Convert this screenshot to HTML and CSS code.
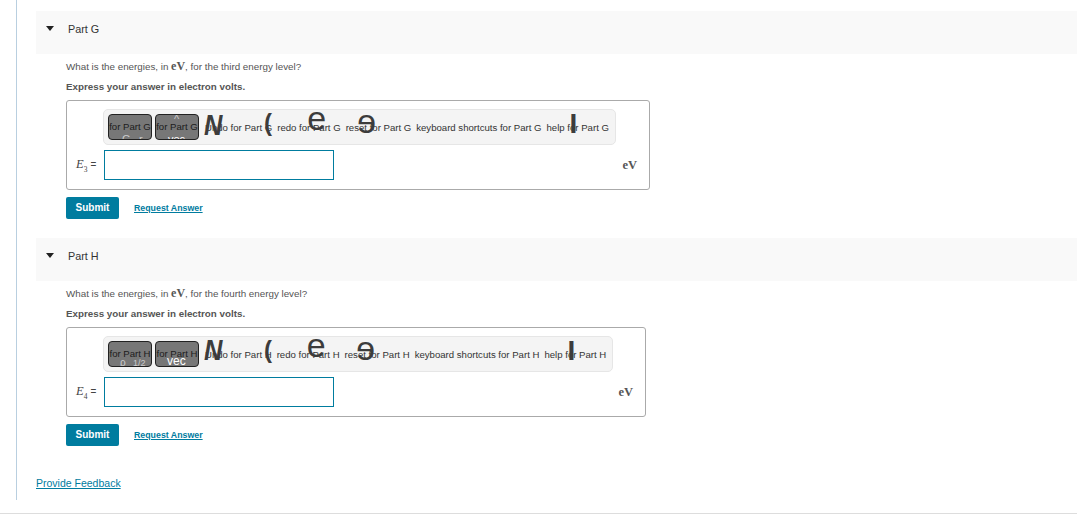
FILE: index.html
```html
<!DOCTYPE html>
<html>
    <head>
        <meta charset="utf-8">
        <title>Parts G and H</title>
        <link rel="stylesheet" href="styles.css">
    </head>
    <body>
        <div class="content">
            <div class="part">
                <div class="partHead"><span class="arrow"></span>Part G</div>
                <div class="partBody">
                    <p class="question">What is the energies, in <span class="math">eV</span>, for the third energy level?</p>
                    <p class="hint">Express your answer in electron volts.</p>
                    <div class="answerBox boxG">
                        <div class="toolbar toolbarG">
                            <span class="toolBtn">for Part G<i class="bit bitOne">G</i><i class="bit bitTwo">r</i></span>
                            <span class="toolBtn toolBtnTwo">for Part G<i class="bit bitHat">^</i><i class="bit bitVec">vec</i></span>
                            <span class="word wordUndo">Undo for Part G<i class="glyph glyphN">N</i><i class="glyph glyphParen">(</i></span>
                            <span class="word">redo for Part G<i class="glyph glyphE">e</i></span>
                            <span class="word">reset for Part G<i class="glyph glyphE2">e</i></span>
                            <span class="word">keyboard shortcuts for Part G</span>
                            <span class="word">help for Part G<i class="glyph glyphI">I</i></span>
                        </div>
                        <div class="answerRow">
                            <span class="label"><em>E</em><sub>3</sub> <span class="equals">=</span></span>
                            <input class="answerInput" type="text">
                            <span class="unit">eV</span>
                        </div>
                    </div>
                    <div class="actions">
                        <button class="submitBtn">Submit</button>
                        <a class="linkSmall" href="#">Request Answer</a>
                    </div>
                </div>
            </div>
            <div class="part">
                <div class="partHead"><span class="arrow"></span>Part H</div>
                <div class="partBody">
                    <p class="question">What is the energies, in <span class="math">eV</span>, for the fourth energy level?</p>
                    <p class="hint">Express your answer in electron volts.</p>
                    <div class="answerBox boxH">
                        <div class="toolbar toolbarH">
                            <span class="toolBtn">for Part H<i class="bit bitThree">&rho;</i><i class="bit bitFour">1/2</i></span>
                            <span class="toolBtn toolBtnTwo">for Part H<i class="bit bitVecBig">vec</i></span>
                            <span class="word wordUndo">Undo for Part H<i class="glyph glyphN glyphNH">N</i><i class="glyph glyphParen">(</i></span>
                            <span class="word">redo for Part H<i class="glyph glyphE">e</i></span>
                            <span class="word">reset for Part H<i class="glyph glyphE2">e</i></span>
                            <span class="word">keyboard shortcuts for Part H</span>
                            <span class="word">help for Part H<i class="glyph glyphI">I</i></span>
                        </div>
                        <div class="answerRow">
                            <span class="label"><em>E</em><sub>4</sub> <span class="equals">=</span></span>
                            <input class="answerInput" type="text">
                            <span class="unit">eV</span>
                        </div>
                    </div>
                    <div class="actions">
                        <button class="submitBtn">Submit</button>
                        <a class="linkSmall" href="#">Request Answer</a>
                    </div>
                </div>
            </div>
            <a class="feedback" href="#">Provide Feedback</a>
        </div>
        <div class="pageRule"></div>
    </body>
</html>
```

FILE: styles.css
```css
html, body {
    margin: 0;
    height: 518px;
    overflow: hidden;
}
body {
    background: white;
    color: #333;
    font-family: "Liberation Sans", Arial, sans-serif;
}
.content {
    box-sizing: border-box;
    height: 500px;
    margin-left: 16px;
    padding: 11px 0 0 19px;
    border-left: 1px solid #b9cfe0;
}
.part {
    height: 227px;
}
.partHead {
    box-sizing: border-box;
    display: flex;
    align-items: center;
    height: 43px;
    padding-bottom: 8px;
    background: #f9f9f9;
    font-size: 10.8px;
    color: #333;
}
.arrow {
    width: 0;
    height: 0;
    margin: 0 14px 0 10px;
    border-left: 4px solid transparent;
    border-right: 4px solid transparent;
    border-top: 5px solid #222;
}
.partBody {
    padding: 5px 0 0 30px;
}
.question {
    margin: 0;
    height: 14px;
    line-height: 14px;
    font-size: 9.8px;
    color: #555;
}
.math {
    font-family: "Liberation Serif", serif;
    font-size: 12px;
    font-weight: bold;
    color: #555;
}
.hint {
    margin: 7px 0 0;
    height: 13px;
    line-height: 13px;
    font-size: 9.8px;
    font-weight: bold;
    color: #555;
}
.answerBox {
    box-sizing: border-box;
    height: 90px;
    margin-top: 7px;
    padding: 8px 0 0 37px;
    border: 1px solid #aaa;
    border-radius: 3px;
}
.boxG {
    width: 584px;
}
.boxH {
    width: 580px;
}
.toolbar {
    box-sizing: border-box;
    display: flex;
    align-items: center;
    gap: 5px;
    height: 36px;
    margin-left: -1px;
    padding-left: 4px;
    background: #f4f4f4;
    border: 1px solid #e6e6e6;
    border-radius: 5px;
    font-size: 9.6px;
    color: #333;
    white-space: nowrap;
}
.toolbarG {
    width: 513px;
}
.toolbarH {
    width: 510px;
}
.toolBtn {
    box-sizing: border-box;
    position: relative;
    display: block;
    flex: none;
    width: 44px;
    height: 26px;
    line-height: 24px;
    overflow: hidden;
    text-align: center;
    background: #777;
    border: 1px solid #222;
    border-radius: 4px;
    color: #1c1c1c;
}
.toolBtnTwo {
    margin-left: -2px;
}
.bit {
    position: absolute;
    font-style: normal;
    color: #ccc;
}
.bitOne {
    left: 13px;
    top: 12px;
    font-size: 11px;
}
.bitTwo {
    left: 30px;
    top: 12px;
    font-size: 11px;
}
.bitThree {
    left: 11px;
    top: 9px;
    font-size: 10px;
}
.bitFour {
    left: 24px;
    top: 9px;
    font-size: 9px;
}
.bitHat {
    left: 18px;
    top: -8px;
    font-size: 11px;
}
.bitVec {
    left: 12px;
    top: 12px;
    font-size: 11px;
    color: white;
}
.bitVecBig {
    left: 11px;
    top: 7px;
    font-size: 12px;
    color: white;
}
.word {
    position: relative;
    flex: none;
}
.wordUndo {
    margin-left: 1px;
}
.glyph {
    position: absolute;
    font-style: normal;
    font-family: "Liberation Sans", Arial, sans-serif;
    color: #3c3c3c;
    line-height: 1;
}
.glyphN {
    left: -1px;
    top: -12px;
    font-size: 30px;
    font-style: italic;
    font-weight: bold;
    transform: scaleX(0.85);
    transform-origin: left;
}
.glyphNH {
    top: -14px;
}
.glyphParen {
    left: 59px;
    top: -11px;
    font-size: 24px;
    font-weight: bold;
}
.glyphE {
    left: 30px;
    top: -21px;
    font-size: 34px;
}
.glyphE2 {
    left: 11px;
    top: -18px;
    font-size: 34px;
    transform: scaleX(-1);
}
.glyphI {
    left: 23px;
    top: -12px;
    font-size: 28px;
    font-weight: bold;
}
.answerRow {
    position: relative;
    display: flex;
    align-items: center;
    height: 30px;
    margin-top: 5px;
}
.label {
    position: absolute;
    left: -28px;
    font-family: "Liberation Serif", serif;
    font-size: 12.5px;
    color: #444;
}
.label sub {
    font-size: 7.5px;
}
.equals {
    font-family: "Liberation Sans", Arial, sans-serif;
    font-size: 10px;
}
.answerInput {
    box-sizing: border-box;
    width: 230px;
    height: 30px;
    margin: 0;
    padding: 0;
    border: 1px solid #007c9f;
    background: white;
}
.unit {
    margin-left: auto;
    margin-right: 12px;
    font-family: "Liberation Serif", serif;
    font-size: 12.5px;
    font-weight: bold;
    color: #555;
}
.actions {
    display: flex;
    align-items: center;
    gap: 15px;
    margin-top: 7px;
}
.submitBtn {
    width: 53px;
    height: 22px;
    padding: 0 0 2px;
    background: #007c9f;
    border: 0;
    border-radius: 2px;
    color: white;
    font-family: "Liberation Sans", Arial, sans-serif;
    font-size: 10px;
    font-weight: bold;
}
.linkSmall {
    font-size: 8.8px;
    font-weight: bold;
    color: #007c9f;
}
.feedback {
    display: block;
    width: fit-content;
    margin-top: 12px;
    font-size: 10.5px;
    line-height: 12px;
    color: #007c9f;
}
.pageRule {
    height: 1px;
    margin-top: 13px;
    background: #ddd;
}
```
